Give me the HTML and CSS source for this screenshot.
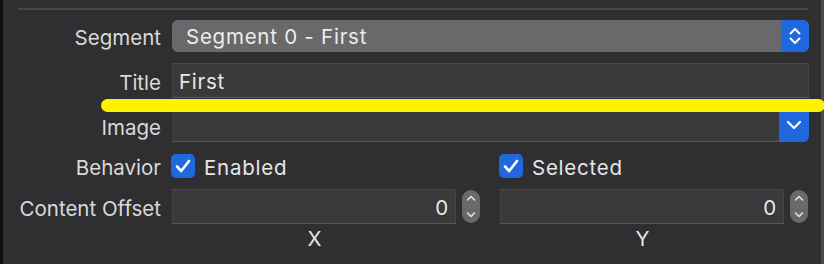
FILE: index.html
```html
<!DOCTYPE html>
<html>
<head>
<meta charset="utf-8">
<link rel="stylesheet" href="styles.css">
</head>
<body>
<div class="panel">
  <div class="sep"></div>
  <div class="row row-segment">
    <div class="label">Segment</div>
    <div class="content">
      <div class="popup">
        <span class="popup-text">Segment 0 - First</span>
        <span class="popup-btn">
          <svg width="14" height="20" viewBox="0 0 14 20"><path d="M2.5 7.5 L7 3 L11.5 7.5 M2.5 12.5 L7 17 L11.5 12.5" fill="none" stroke="#fff" stroke-width="2" stroke-linecap="round" stroke-linejoin="round"/></svg>
        </span>
      </div>
    </div>
  </div>
  <div class="row row-title">
    <div class="label">Title</div>
    <div class="content">
      <div class="field field-title">First</div>
    </div>
  </div>
  <div class="row row-image">
    <div class="label">Image</div>
    <div class="content">
      <div class="combo">
        <span class="combo-text"></span>
        <span class="combo-btn">
          <svg width="16" height="10" viewBox="0 0 16 10"><path d="M2 2 L8 8 L14 2" fill="none" stroke="#fff" stroke-width="2.2" stroke-linecap="round" stroke-linejoin="round"/></svg>
        </span>
      </div>
    </div>
  </div>
  <div class="row row-behavior">
    <div class="label">Behavior</div>
    <div class="content halves">
      <div class="check">
        <span class="box"><svg width="24" height="24" viewBox="0 0 24 24"><path d="M6 12.5 L10.2 17 L18 7" fill="none" stroke="#fff" stroke-width="2.6" stroke-linecap="round" stroke-linejoin="round"/></svg></span>
        <span class="check-text">Enabled</span>
      </div>
      <div class="check">
        <span class="box"><svg width="24" height="24" viewBox="0 0 24 24"><path d="M6 12.5 L10.2 17 L18 7" fill="none" stroke="#fff" stroke-width="2.6" stroke-linecap="round" stroke-linejoin="round"/></svg></span>
        <span class="check-text">Selected</span>
      </div>
    </div>
  </div>
  <div class="row row-offset">
    <div class="label">Content Offset</div>
    <div class="content halves">
      <div class="numgroup">
        <div class="field field-num">0</div>
        <div class="stepper"><svg width="18" height="33" viewBox="0 0 18 33"><path d="M5.5 10 L9 6.5 L12.5 10 M5.5 23 L9 26.5 L12.5 23" fill="none" stroke="#e4e4e4" stroke-width="1.6" stroke-linecap="round" stroke-linejoin="round"/></svg></div>
      </div>
      <div class="numgroup">
        <div class="field field-num">0</div>
        <div class="stepper"><svg width="18" height="33" viewBox="0 0 18 33"><path d="M5.5 10 L9 6.5 L12.5 10 M5.5 23 L9 26.5 L12.5 23" fill="none" stroke="#e4e4e4" stroke-width="1.6" stroke-linecap="round" stroke-linejoin="round"/></svg></div>
      </div>
    </div>
  </div>
  <div class="row row-axis">
    <div class="label"></div>
    <div class="content halves">
      <div class="axis"><span class="axis-name">X</span></div>
      <div class="axis"><span class="axis-name">Y</span></div>
    </div>
  </div>
  <div class="highlight"></div>
</div>
</body>
</html>
```
FILE: styles.css
```css
html, body {
  margin: 0;
  padding: 0;
  background: #2f2f31;
}
.panel {
  position: relative;
  width: 824px;
  height: 264px;
  box-sizing: border-box;
  background: #2f2f31;
  border-left: 3px solid #0f0f10;
  border-right: 3px solid #4a4a4c;
  padding-top: 8px;
  font-family: Inter, "Liberation Sans", sans-serif;
  font-size: 20.5px;
  color: #e6e6e6;
}
.sep {
  height: 2px;
  margin-left: 15px;
  margin-right: 13px;
  background: #48484a;
}
.row {
  display: flex;
  align-items: center;
}
.label {
  width: 158px;
  flex: none;
  text-align: right;
  color: #d9d9d9;
  padding-top: 3px;
}
.content {
  width: 637px;
  margin-left: 11px;
  letter-spacing: 0.75px;
}
.halves {
  display: grid;
  grid-template-columns: 1fr 1fr;
  column-gap: 19px;
}
.row-segment { margin-top: 10px; height: 32px; }
.row-title { margin-top: 11px; height: 35px; }
.row-image { margin-top: 12px; height: 32px; }
.row-behavior { margin-top: 12px; height: 24px; }
.row-offset { margin-top: 11px; height: 35px; }
.row-axis { margin-top: 2px; height: 24px; }

.popup {
  display: flex;
  height: 32px;
  border-radius: 6px;
  background: #69696b;
  overflow: hidden;
}
.popup-text {
  flex: 1;
  padding-left: 14px;
  line-height: 33px;
  color: #ececec;
}
.popup-btn {
  width: 28px;
  background: #2068de;
  display: flex;
  align-items: center;
  justify-content: center;
}
.field {
  box-sizing: border-box;
  height: 35px;
  background: #3a3a3c;
  border: 1px solid #47474a;
  border-bottom-color: #58585a;
  line-height: 35px;
  color: #e8e8e8;
}
.field-title {
  padding-left: 6px;
}
.combo {
  display: flex;
  height: 32px;
  box-sizing: border-box;
  background: #3a3a3c;
  border-bottom: 1px solid #58585a;
  border-radius: 0 0 6px 0;
}
.combo-text { flex: 1; }
.combo-btn {
  width: 30px;
  margin-bottom: -1px;
  background: #2068de;
  border-radius: 0 0 6px 0;
  display: flex;
  align-items: center;
  justify-content: center;
  padding-bottom: 2px;
  box-sizing: border-box;
}
.check {
  display: flex;
  align-items: center;
}
.box {
  width: 24px;
  height: 24px;
  border-radius: 5px;
  background: #2068de;
  margin-left: -1px;
  display: flex;
}
.check-text {
  margin-left: 9px;
  padding-top: 2px;
}
.numgroup {
  display: flex;
  align-items: center;
  gap: 6px;
}
.field-num {
  flex: 1;
  text-align: right;
  padding-right: 6px;
}
.stepper {
  width: 18px;
  height: 33px;
  border-radius: 9px;
  background: #69696b;
  display: flex;
  margin-right: 1px;
}
.axis {
  display: flex;
}
.axis-name {
  width: calc(100% - 24px);
  text-align: center;
  color: #e6e6e6;
  letter-spacing: 0;
}
.highlight {
  position: absolute;
  left: 98px;
  top: 99px;
  width: 724px;
  height: 13px;
  border-radius: 7px;
  background: #fff200;
}
```
